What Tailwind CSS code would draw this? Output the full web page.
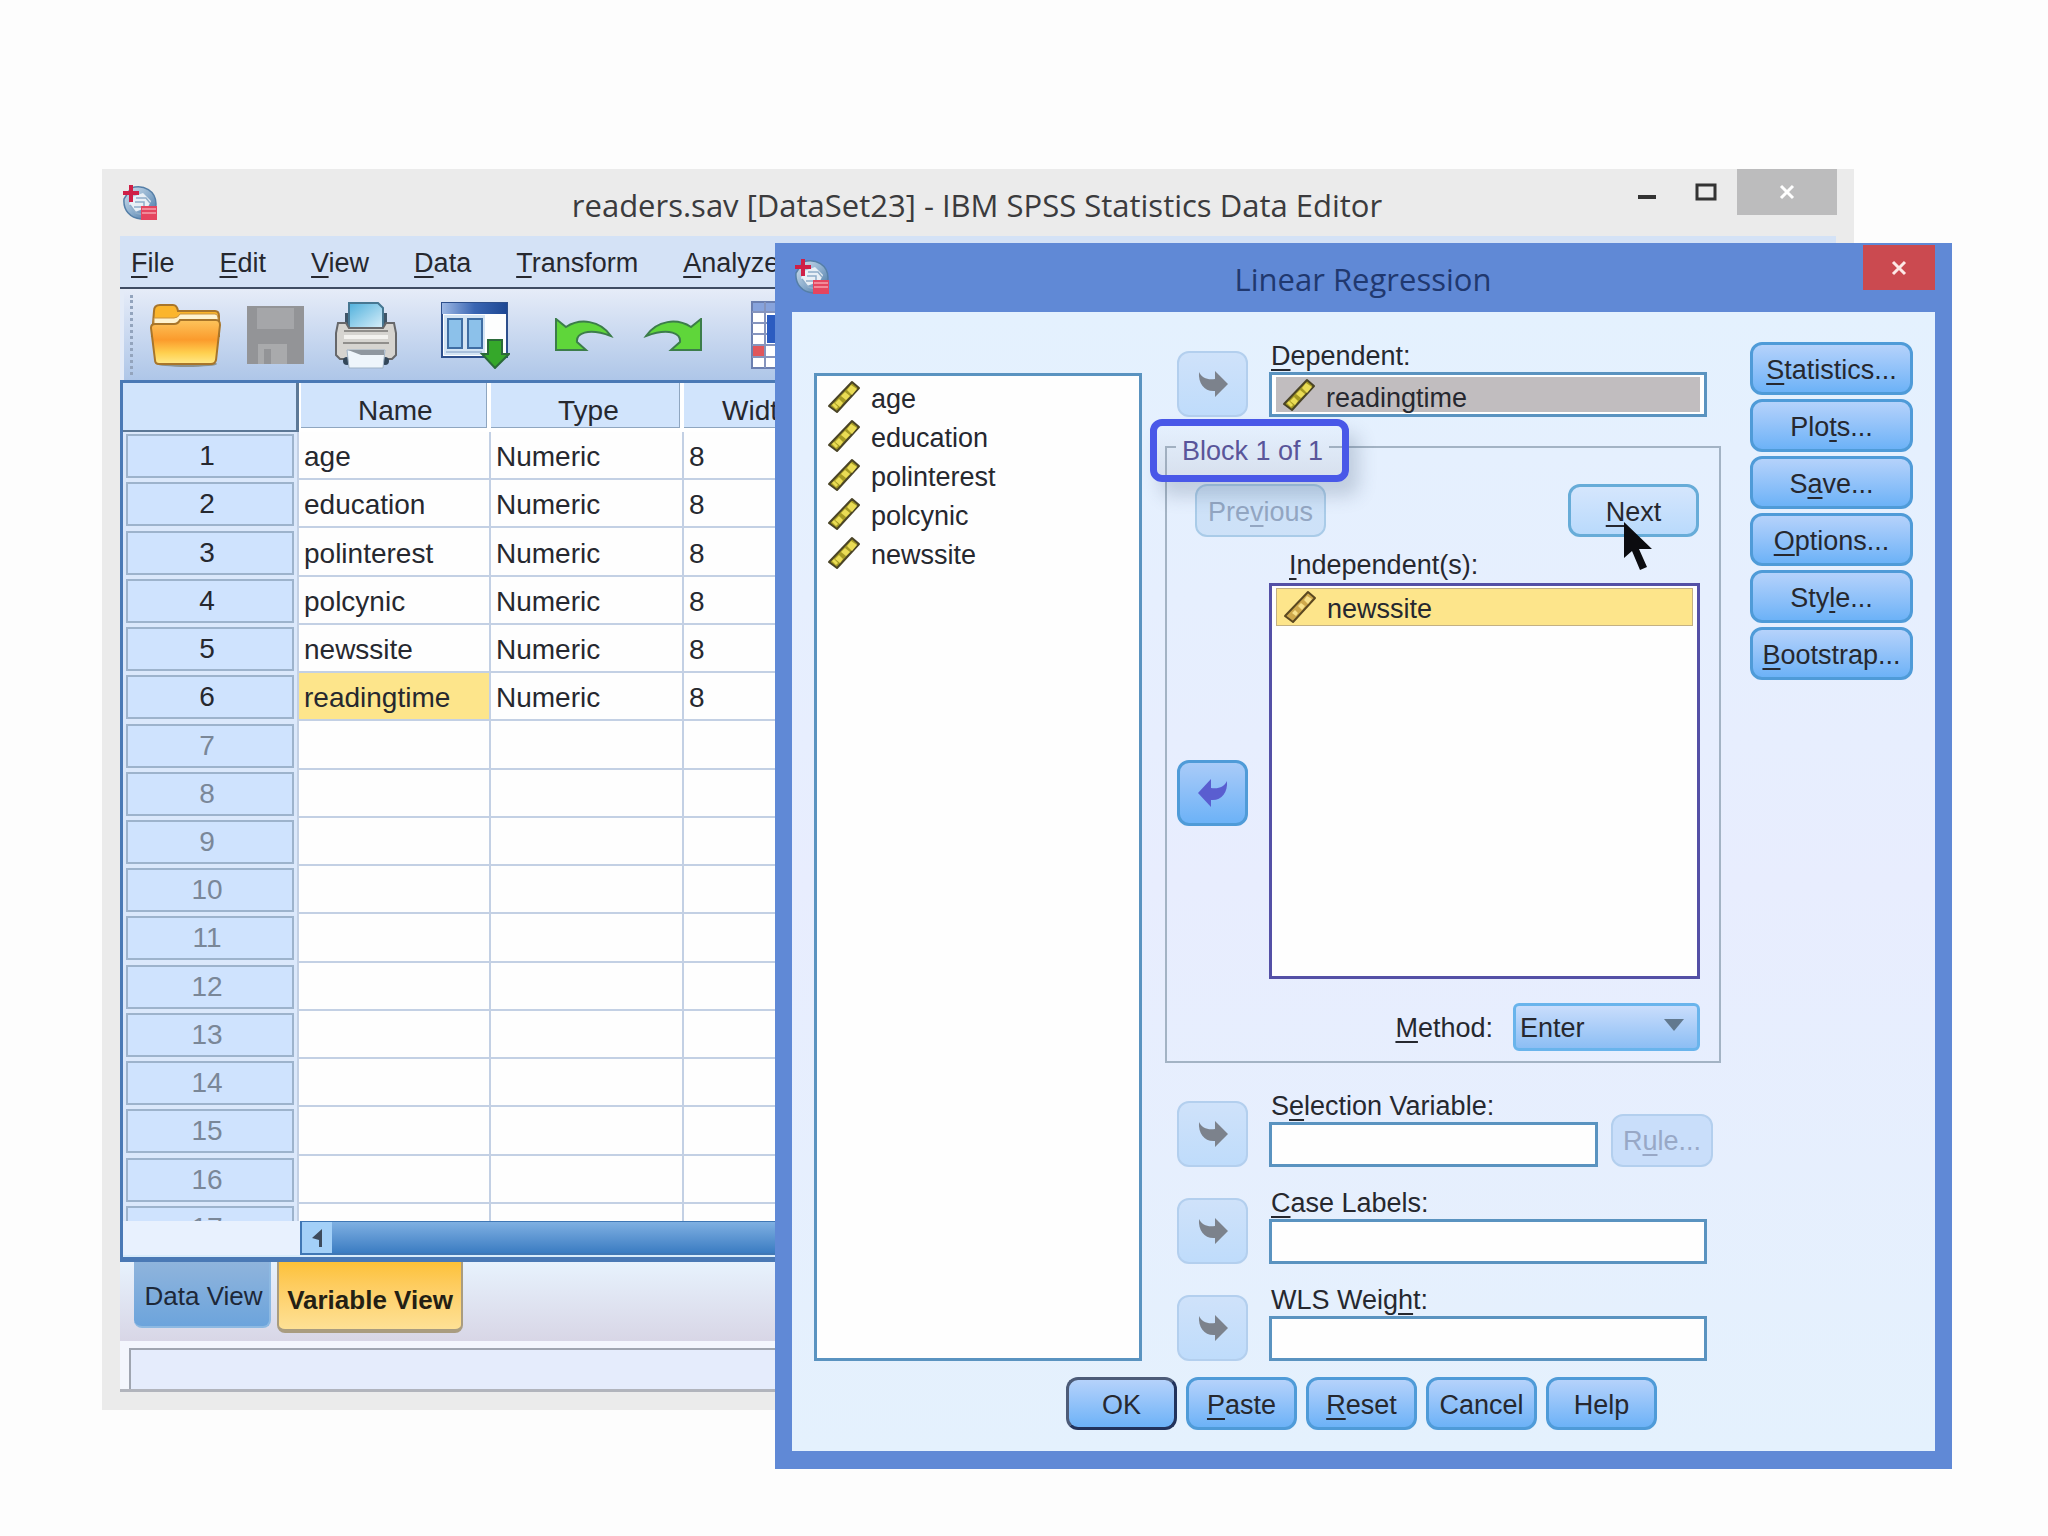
<!DOCTYPE html>
<html lang="en">
<head>
    <meta charset="UTF-8">
    <meta name="viewport" content="width=device-width, initial-scale=1.0">
    <title>readers.sav [DataSet23] - IBM SPSS Statistics Data Editor</title>
    <script src="https://cdn.jsdelivr.net/npm/@tailwindcss/browser@4"></script>
</head>
<body class="relative min-h-screen overflow-hidden bg-[#fdfdfd] font-['Liberation_Sans',Arial,sans-serif] text-[27px] leading-8 text-[#26282f] [&_u]:decoration-2 [&_u]:underline-offset-4 [&_u]:[text-decoration-skip-ink:none]">

    <!-- Shared icons -->
    <svg class="absolute size-0">
        <linearGradient id="globe" x1="0" y1="0" x2="1" y2="1">
            <stop offset="0" stop-color="#d5e2ee"/><stop offset=".5" stop-color="#8fb0cf"/><stop offset="1" stop-color="#3f6f9f"/>
        </linearGradient>
        <symbol id="app" viewBox="0 0 36 36">
            <path d="M9 3C22-1 34 6 34 19L33 34H19C8 33 1 25 2 14Z" fill="url(#globe)" stroke="#557fa8" stroke-width="1.5"/>
            <path d="M10 12l11-4 8 8-3 6-13 5-6-8z" fill="#e8eff6"/>
            <path d="M14 13h10l4 5M8 20l6 8 8 2M13 17h9v5H12" fill="none" stroke="#8fadc9" stroke-width="1.5"/>
            <path d="M19 21h16v14H19z" fill="#e5455f"/>
            <path d="M20 24h14M20 28h14" stroke="#f08a99" stroke-width="2"/>
            <path d="M9 0v17M1 8h16" stroke="#cf1f46" stroke-width="4"/>
        </symbol>
        <symbol id="ruler" viewBox="0 0 34 34">
            <path d="M25 2l7 6L10 32l-8-6z" fill="#a59a24" stroke="#4a4426" stroke-width="2" stroke-linejoin="round"/>
            <path d="M24 5l-4 5 5 5 5-6zM18 12l-4 4 5 4 4-4zM12 19l-4 4 5 4 3-4z" fill="#eadc55"/>
            <path d="M6 24l4 4" stroke="#eadc55" stroke-width="3"/>
        </symbol>
        <symbol id="ruler-selected" viewBox="0 0 34 34">
            <path d="M25 2l7 6L10 32l-8-6z" fill="#cfa94c" stroke="#5b4820" stroke-width="2" stroke-linejoin="round"/>
            <path d="M24 6l-3 4 4 4 4-5zM18 13l-3 3 4 4 3-4zM12 20l-3 3 4 3 2-3z" fill="#f7e08a"/>
        </symbol>
        <symbol id="arrow-right" viewBox="0 0 32 32">
            <path d="M2 4C5 10 10 12 18 11V3L31 16 18 29V23C8 24 1 16 2 4z" fill="#7c828c"/>
        </symbol>
        <symbol id="arrow-left" viewBox="0 0 32 32">
            <path d="M30 4C27 10 22 12 14 11V2L1 16 14 30V23C24 24 31 16 30 4z" fill="#5a5ed0"/>
        </symbol>
    </svg>

    <!-- Data editor -->
    <main class="absolute top-[169px] right-[194px] left-[102px] bg-[#ebebeb] px-[18px] pb-[18px]">
        <header class="-mx-[18px] flex h-[67px] items-start">
            <svg class="mt-4 ml-5 size-9"><use href="#app"/></svg>
            <h1 class="flex-1 pt-4 pl-[177px] text-center font-['Open_Sans','Noto_Sans',sans-serif] text-[31px] leading-10 text-[#3b3b3d]">readers.sav [DataSet23] - IBM SPSS Statistics Data Editor</h1>
            <div class="flex">
                <button class="h-[46px] w-14" aria-label="Minimize"><svg class="mx-auto h-6 w-6" viewBox="0 0 24 24"><path d="M3 17h18" stroke="#333" stroke-width="4"/></svg></button>
                <button class="h-[46px] w-[62px]" aria-label="Maximize"><svg class="mx-auto h-6 w-6" viewBox="0 0 24 24"><path d="M3 5h18v14H3z" fill="none" stroke="#333" stroke-width="3"/></svg></button>
                <button class="mr-[17px] h-[46px] w-[100px] bg-[#bcbcbd]" aria-label="Close"><svg class="mx-auto size-5" viewBox="0 0 20 20"><path d="M4 4l12 12M16 4L4 16" stroke="#fff" stroke-width="3"/></svg></button>
            </div>
        </header>

        <nav class="flex h-[53px] items-center gap-[45px] border-b-2 border-[#3f4c63] bg-[#d4e2f6] pt-0.5 pr-4 pl-[11px]">
            <a href="#"><u>F</u>ile</a>
            <a href="#"><u>E</u>dit</a>
            <a href="#"><u>V</u>iew</a>
            <a href="#"><u>D</u>ata</a>
            <a href="#"><u>T</u>ransform</a>
            <a href="#"><u>A</u>nalyze</a>
        </nav>

        <div class="flex h-[91px] items-center border-l-4 border-[#e4ebf7] bg-linear-to-b from-[#e6ecf8] to-[#aec6e8] pl-1.5">
            <div class="h-20 border-l-3 border-dotted border-[#93a4bd]"></div>
            <button class="ml-4" aria-label="Open">
                <svg class="h-[68px] w-[72px]" viewBox="0 0 72 68">
                    <linearGradient id="fold" x1="0" y1="0" x2="0" y2="1"><stop offset="0" stop-color="#fdc45c"/><stop offset=".45" stop-color="#fb9b2c"/><stop offset=".75" stop-color="#ffd04f"/><stop offset="1" stop-color="#ffe98a"/></linearGradient>
                    <ellipse cx="38" cy="63" rx="30" ry="3" fill="#6d6a55" opacity=".6"/>
                    <path d="M5 10q0-6 6-6h13q4 0 5 6h37q4 0 4 5v20H3z" fill="#fbb52c" stroke="#a8752a" stroke-width="2"/>
                    <path d="M5 17h20q4 0 6-4h35q3 0 3 4v8H5z" fill="#fff3d0" stroke="#c99340" stroke-width="1"/>
                    <path d="M2 27q0-4 4-4h19q4 0 6-4h36q4 0 4 5l-4 35q-1 4-5 4H10q-4 0-4-4z" fill="url(#fold)" stroke="#a8752a" stroke-width="2"/>
                </svg>
            </button>
            <button class="ml-[26px]" aria-label="Save" disabled>
                <svg class="h-[58px] w-[57px]" viewBox="0 0 57 58">
                    <path d="M0 0h57v58H0z" fill="#939497"/>
                    <path d="M10 2h37v21H10z" fill="#a5a6a9"/>
                    <path d="M11 38h29v20H11z" fill="#a9aaac"/><path d="M17 43h7v15h-7z" fill="#939497"/>
                </svg>
            </button>
            <button class="ml-[31px]" aria-label="Print">
                <svg class="h-[68px] w-[62px]" viewBox="0 0 62 68">
                    <linearGradient id="sheet" x1="0" y1="0" x2="1" y2="1"><stop offset="0" stop-color="#4fb0dc"/><stop offset="1" stop-color="#d9effa"/></linearGradient>
                    <path d="M10 12h8v12h-8zM45 12h7v12h-7z" fill="#3f5568"/>
                    <path d="M14 2h29l5 5v20H14z" fill="url(#sheet)" stroke="#467792" stroke-width="2"/>
                    <path d="M3 22h8l3 5h34l3-5h8l2 10v22l-4 4H5l-4-4V32z" fill="#d6d4d0" stroke="#66676a" stroke-width="2"/>
                    <path d="M9 30h44" stroke="#908e8b" stroke-width="2"/><path d="M9 36h44" stroke="#f3f2ef" stroke-width="4"/><path d="M8 42h46" stroke="#908e8b" stroke-width="2"/>
                    <circle cx="12" cy="60" r="4" fill="#33475a"/><circle cx="50" cy="60" r="4" fill="#33475a"/>
                    <path d="M12 49h38l-2 18H14z" fill="#eef5fb" stroke="#9fb2c6"/>
                    <path d="M13 49h36v5H26z" fill="#8f979f"/>
                </svg>
            </button>
            <button class="ml-[43px]" aria-label="Recall dialog">
                <svg class="h-[68px] w-[70px]" viewBox="0 0 70 68">
                    <linearGradient id="win" x1="0" x2="1"><stop offset="0" stop-color="#9db8e4"/><stop offset=".5" stop-color="#3a66b3"/><stop offset="1" stop-color="#1d4793"/></linearGradient>
                    <path d="M2 2h65v54H2z" fill="#fdfefe" stroke="#2d4f8c" stroke-width="2"/>
                    <path d="M2 2h65v11H2z" fill="url(#win)"/>
                    <path d="M4 14h41v40H4z" fill="#d3e4f4"/>
                    <path d="M8 18h14v29H8zM28 18h14v29H28z" fill="#8cc1ea" stroke="#3f6ea3" stroke-width="2"/>
                    <path d="M6 51h36" stroke="#7f9cc4" stroke-width="1"/>
                    <path d="M48 39h14v14h7L55 67 42 53h6z" fill="#35a82a" stroke="#2b6a3a" stroke-width="2"/>
                </svg>
            </button>
            <button class="ml-11" aria-label="Undo">
                <svg class="h-[34px] w-[60px]" viewBox="0 0 60 34"><path d="M2 1v31h30l-9-8C22 16 33 9 57 18 46 2 26 0 12 9z" fill="#5fd63a" stroke="#3c7d4a" stroke-width="2"/></svg>
            </button>
            <button class="ml-[29px]" aria-label="Redo">
                <svg class="h-[34px] w-[60px]" viewBox="0 0 60 34"><path d="M58 1v31H28l9-8C38 16 27 9 3 18 14 2 34 0 48 9z" fill="#5fd63a" stroke="#3c7d4a" stroke-width="2"/></svg>
            </button>
            <button class="ml-12" aria-label="Go to case">
                <svg class="h-[68px] w-[64px]" viewBox="0 0 64 68">
                    <path d="M1 1h62v66H1z" fill="#fff" stroke="#6b7fb0" stroke-width="2"/>
                    <path d="M2 2h60v9H2z" fill="#87a3dc"/><path d="M2 45h12v11H2z" fill="#e0565b"/>
                    <path d="M1 11h62M1 22h62M1 33h62M1 44h62M1 56h62M14 1v66M38 1v66" stroke="#8594bd" stroke-width="2"/>
                    <path d="M16 14h24v28H16z" fill="#2c5cc0"/>
                </svg>
            </button>
        </div>

        <section class="border-3 border-b-5 border-[#4a79b5] bg-[#e8f1fe]">
            <div class="h-[838px] overflow-hidden">
                <table class="h-[869px] w-full table-fixed border-separate border-spacing-0 text-left text-[28px] font-normal">
                    <thead>
                        <tr class="h-[49px]">
                            <th class="w-[176px] border-r-3 border-b-2 border-[#5c7896] bg-[#d1e4fc]"></th>
                            <th class="w-48 border-r-4 border-b-4 border-l-2 border-white bg-[#d1e4fc] p-0"><div class="h-[45px] border-r border-b border-[#8fa6c0] pt-3 pl-[57px] font-normal">Name</div></th>
                            <th class="w-[193px] border-r-4 border-b-4 border-white bg-[#d1e4fc] p-0"><div class="h-[45px] border-r border-b border-[#8fa6c0] pt-3 pl-[67px] font-normal">Type</div></th>
                            <th class="w-[193px] border-r-4 border-b-4 border-white bg-[#d1e4fc] p-0"><div class="h-[45px] border-r border-b border-[#8fa6c0] pt-3 pl-[38px] font-normal">Width</div></th>
                            <th class="border-b-4 border-white bg-[#d1e4fc]"></th>
                        </tr>
                    </thead>
                    <tbody id="rows"></tbody>
                </table>
            </div>
            <div class="ml-[177px] flex h-[34px] border-t border-b-2 border-[#3f77b5] bg-linear-to-b from-[#7fb0e2] to-[#3a7cc2]">
                <button class="w-8 border-l-2 border-[#3f77b5] bg-[#a3d0f8]" aria-label="Scroll left"><svg class="mx-auto h-5 w-3" viewBox="0 0 12 20"><path d="M11 1v18h-3V12L1 10z" fill="#3d4b5c"/></svg></button>
            </div>
            <div class="h-0.5 bg-[#d8ecfb]"></div>
        </section>

        <div class="flex h-[79px] items-start gap-1.5 bg-linear-to-b from-[#e7f2fd] to-[#d8d6e6] pl-3.5">
            <button class="h-[66px] w-[137px] rounded-b-lg border-r-2 border-b-2 border-[#8db9e2] bg-linear-to-b from-[#8fb4dc] to-[#6ca4dc] pt-1 pl-1 text-center text-[26px] text-[#1d2838]">Data View</button>
            <button class="h-[71px] w-[186px] rounded-b-lg border-2 border-t-0 border-b-4 border-[#a99c80] bg-linear-to-b from-[#fdc136] to-[#fee195] pt-2 text-[26px] font-bold text-[#241f14]">Variable View</button>
        </div>
        <footer class="border-b-3 border-[#b1b4bc] bg-[#f3f6fd] pt-[7px] pr-3 pl-[9px]">
            <div class="h-[41px] border-t-2 border-l-2 border-[#9fa5b0] bg-[#e5ecfc]"></div>
        </footer>
    </main>

    <!-- Linear Regression dialog -->
    <div role="dialog" aria-labelledby="dialog-title" class="absolute top-[243px] right-[96px] left-[775px] bg-[#6089d6] px-[17px] pb-[18px]">
        <header class="flex h-[69px] items-start">
            <svg class="mt-4 ml-0.5 size-9"><use href="#app"/></svg>
            <h2 id="dialog-title" class="flex-1 pt-4 pl-[33px] text-center font-['Open_Sans','Noto_Sans',sans-serif] text-[31px] leading-10 text-[#20386f]">Linear Regression</h2>
            <button class="mt-0.5 h-[45px] w-[72px] bg-[#cb4a50]" aria-label="Close"><svg class="mx-auto size-5" viewBox="0 0 20 20"><path d="M4 4l12 12M16 4L4 16" stroke="#fde9e7" stroke-width="3"/></svg></button>
        </header>

        <form class="bg-linear-to-b from-[#e4f1fe] via-[#e8edfe] to-[#e4f1fd] pr-[22px] pb-[21px] pl-[22px]">
            <div class="flex">
                <ul role="listbox" aria-label="Variables" class="mt-[61px] flex w-[328px] flex-col gap-[3px] border-3 border-[#5a93c0] bg-[#fefefe] py-[3px] pl-2.5">
                    <li class="flex items-center gap-2.5"><svg class="size-[34px]"><use href="#ruler"/></svg><span class="pt-1">age</span></li>
                    <li class="flex items-center gap-2.5"><svg class="size-[34px]"><use href="#ruler"/></svg><span class="pt-1">education</span></li>
                    <li class="flex items-center gap-2.5"><svg class="size-[34px]"><use href="#ruler"/></svg><span class="pt-1">polinterest</span></li>
                    <li class="flex items-center gap-2.5"><svg class="size-[34px]"><use href="#ruler"/></svg><span class="pt-1">polcynic</span></li>
                    <li class="flex items-center gap-2.5"><svg class="size-[34px]"><use href="#ruler"/></svg><span class="pt-1">newssite</span></li>
                </ul>

                <div class="ml-[23px] flex-1 pt-7">
                    <div class="flex items-end gap-[21px] pr-3.5 pl-3">
                        <button type="button" aria-label="Move to Dependent" class="h-[66px] w-[71px] rounded-xl border-2 border-[#b3cfee] bg-linear-to-b from-[#cfe2fa] to-[#bfdcfb]"><svg class="mx-auto size-8"><use href="#arrow-right"/></svg></button>
                        <div class="flex-1">
                            <label for="dependent" class="block pl-0.5"><u>D</u>ependent:</label>
                            <div class="h-[45px] border-3 border-[#5a93c0] bg-white px-1 pt-0.5 pb-0.5">
                                <div class="flex h-full items-center gap-2.5 bg-[#c1bdbf] pl-1.5">
                                    <svg class="size-[34px]"><use href="#ruler"/></svg>
                                    <input id="dependent" class="min-w-0 flex-1 pt-1.5 outline-none" value="readingtime" readonly>
                                </div>
                            </div>
                        </div>
                    </div>

                    <fieldset class="relative mt-[13px] border-2 border-[#a3b3c4] pb-2.5">
                        <legend class="ml-[9px] h-[34px] px-1.5 leading-[42px] text-[#55519a]">Block 1 of 1</legend>
                        <!-- highlight around the block counter -->
                        <div class="absolute -top-[45px] -left-[17px] h-[63px] w-[199px] rounded-xl border-[7px] border-[#4958e8] bg-linear-to-b from-transparent to-[#8a8a96]/15 shadow-[10px_14px_18px_rgba(60,80,110,0.22)]"></div>
                        <div class="flex justify-between pt-5 pr-5 pl-7">
                            <button type="button" disabled class="h-[53px] w-[131px] rounded-xl border-2 border-[#a9cbe8] bg-[#c3dcf5]/70 pt-0.5 text-[#93a6c2]">Pre<u>v</u>ious</button>
                            <button type="button" class="h-[53px] w-[131px] rounded-xl border-3 border-[#67acd8] bg-linear-to-b from-[#d5e6fd] to-[#b9dafc] pt-0.5"><u>N</u>ext</button>
                        </div>
                        <div class="mt-3 flex items-start gap-[21px] pr-[19px] pl-2.5">
                            <button type="button" aria-label="Remove from Independents" class="mt-[211px] h-[66px] w-[71px] rounded-xl border-3 border-[#4f9bd8] bg-linear-to-b from-[#a9cbf8] to-[#6cb2f7]"><svg class="mx-auto size-8"><use href="#arrow-left"/></svg></button>
                            <div class="flex-1">
                                <div id="indep-label" class="pl-5"><u>I</u>ndependent(s):</div>
                                <ul role="listbox" aria-labelledby="indep-label" class="mt-0.5 h-[396px] border-3 border-[#5450a6] bg-[#fefefe] px-1 py-0.5">
                                    <li aria-selected="true" class="flex h-[38px] items-center gap-2.5 border border-[#c4b183] bg-[#fde58b] pl-1.5"><svg class="size-[34px]"><use href="#ruler-selected"/></svg><span class="pt-1">newssite</span></li>
                                </ul>
                            </div>
                        </div>
                        <div class="mt-6 flex items-center justify-end gap-5 pr-[19px]">
                            <label for="method" class="pt-0.5"><u>M</u>ethod:</label>
                            <div class="relative">
                                <select id="method" class="h-12 w-[187px] appearance-none rounded-md border-3 border-[#69b4ec] bg-linear-to-b from-[#c9ddfc] to-[#8cbef4] pt-0.5 pl-1"><option>Enter</option><option>Stepwise</option><option>Remove</option></select>
                                <svg class="pointer-events-none absolute top-4 right-4 h-3 w-5" viewBox="0 0 20 12"><path d="M0 0h20L10 12z" fill="#62798f"/></svg>
                            </div>
                        </div>
                    </fieldset>

                    <div class="mt-[27px] flex flex-col gap-5">
                        <div class="flex items-end gap-[21px] pr-2 pl-3">
                            <button type="button" aria-label="Move to Selection Variable" class="h-[66px] w-[71px] rounded-xl border-2 border-[#b3cfee] bg-linear-to-b from-[#cfe2fa] to-[#bfdcfb]"><svg class="mx-auto size-8"><use href="#arrow-right"/></svg></button>
                            <div class="flex flex-1 items-end gap-[13px]">
                                <div class="flex-1">
                                    <label for="selection" class="block pl-0.5">S<u>e</u>lection Variable:</label>
                                    <input id="selection" class="block h-[45px] w-full border-3 border-[#5a93c0] bg-[#fefefe] px-1">
                                </div>
                                <button type="button" disabled class="h-[53px] w-[102px] rounded-xl border-2 border-[#b3cfee] bg-[#c9defa] text-[#98a8c6]">R<u>u</u>le...</button>
                            </div>
                        </div>
                        <div class="flex items-end gap-[21px] pr-3.5 pl-3">
                            <button type="button" aria-label="Move to Case Labels" class="h-[66px] w-[71px] rounded-xl border-2 border-[#b3cfee] bg-linear-to-b from-[#cfe2fa] to-[#bfdcfb]"><svg class="mx-auto size-8"><use href="#arrow-right"/></svg></button>
                            <div class="flex-1">
                                <label for="case-labels" class="block pl-0.5"><u>C</u>ase Labels:</label>
                                <input id="case-labels" class="block h-[45px] w-full border-3 border-[#5a93c0] bg-[#fefefe] px-1">
                            </div>
                        </div>
                        <div class="flex items-end gap-[21px] pr-3.5 pl-3">
                            <button type="button" aria-label="Move to WLS Weight" class="h-[66px] w-[71px] rounded-xl border-2 border-[#b3cfee] bg-linear-to-b from-[#cfe2fa] to-[#bfdcfb]"><svg class="mx-auto size-8"><use href="#arrow-right"/></svg></button>
                            <div class="flex-1">
                                <label for="wls" class="block pl-0.5">WLS Weig<u>h</u>t:</label>
                                <input id="wls" class="block h-[45px] w-full border-3 border-[#5a93c0] bg-[#fefefe] px-1">
                            </div>
                        </div>
                    </div>
                </div>

                <div class="ml-[29px] flex w-[163px] flex-col gap-1 pt-[30px]">
                    <button type="button" class="h-[53px] rounded-xl border-3 border-[#4f9bd8] bg-linear-to-b from-[#b5d2fb] to-[#6cb2f7] pt-0.5"><u>S</u>tatistics...</button>
                    <button type="button" class="h-[53px] rounded-xl border-3 border-[#4f9bd8] bg-linear-to-b from-[#b5d2fb] to-[#6cb2f7] pt-0.5">Plo<u>t</u>s...</button>
                    <button type="button" class="h-[53px] rounded-xl border-3 border-[#4f9bd8] bg-linear-to-b from-[#b5d2fb] to-[#6cb2f7] pt-0.5">S<u>a</u>ve...</button>
                    <button type="button" class="h-[53px] rounded-xl border-3 border-[#4f9bd8] bg-linear-to-b from-[#b5d2fb] to-[#6cb2f7] pt-0.5"><u>O</u>ptions...</button>
                    <button type="button" class="h-[53px] rounded-xl border-3 border-[#4f9bd8] bg-linear-to-b from-[#b5d2fb] to-[#6cb2f7] pt-0.5">Sty<u>l</u>e...</button>
                    <button type="button" class="h-[53px] rounded-xl border-3 border-[#4f9bd8] bg-linear-to-b from-[#b5d2fb] to-[#6cb2f7] pt-0.5"><u>B</u>ootstrap...</button>
                </div>
            </div>

            <div class="mt-4 flex justify-center gap-[9px] pr-1">
                <button type="submit" class="h-[53px] w-[111px] rounded-xl border-3 border-[#4c5b78] border-r-[#22335c] border-b-[#22335c] bg-linear-to-b from-[#b5d2fb] to-[#6cb2f7] pt-0.5">OK</button>
                <button type="button" class="h-[53px] w-[111px] rounded-xl border-3 border-[#4f9bd8] bg-linear-to-b from-[#b5d2fb] to-[#6cb2f7] pt-0.5"><u>P</u>aste</button>
                <button type="reset" class="h-[53px] w-[111px] rounded-xl border-3 border-[#4f9bd8] bg-linear-to-b from-[#b5d2fb] to-[#6cb2f7] pt-0.5"><u>R</u>eset</button>
                <button type="button" class="h-[53px] w-[111px] rounded-xl border-3 border-[#4f9bd8] bg-linear-to-b from-[#b5d2fb] to-[#6cb2f7] pt-0.5">Cancel</button>
                <button type="button" class="h-[53px] w-[111px] rounded-xl border-3 border-[#4f9bd8] bg-linear-to-b from-[#b5d2fb] to-[#6cb2f7] pt-0.5">Help</button>
            </div>
        </form>
    </div>

    <!-- Mouse pointer -->
    <svg class="absolute top-[521px] left-[1623px] h-[50px] w-[30px]" viewBox="0 0 30 50"><path d="M1 1v36l8-7 8 19 7-3-8-18h13z" fill="#0c0c10"/></svg>

    <script>
        const names = ['age', 'education', 'polinterest', 'polcynic', 'newssite', 'readingtime'];
        const cell = 'border-r-2 border-b-2 border-[#c3d0e4] bg-[#fefefe] p-0 pt-1 pl-[5px]';
        const selected = 'border-r-2 border-b-2 border-[#c3d0e4] bg-[#fde58b] p-0 pt-1 pl-[5px]';
        let html = '';

        for (let i = 1; i <= 17; i++) {
            const name = names[i - 1] || '';
            const used = name !== '';
            html += `<tr class="h-12">
                <th class="border-r-2 border-[#c3d0e4] bg-[#dbe8fb] p-0 pr-[3px] pl-[3px]">
                    <div class="h-11 border-2 border-[#9db3cc] bg-[#cfe3fe] pt-1 pr-1.5 text-center font-normal ${used ? 'text-[#26282f]' : 'text-[#7a8798]'}">${i}</div>
                </th>
                <td class="${name === 'readingtime' ? selected : cell}">${name}</td>
                <td class="${cell}">${used ? 'Numeric' : ''}</td>
                <td class="${cell}">${used ? '8' : ''}</td>
                <td class="${cell}"></td>
            </tr>`;
        }
        document.getElementById('rows').innerHTML = html;
    </script>
</body>
</html>
